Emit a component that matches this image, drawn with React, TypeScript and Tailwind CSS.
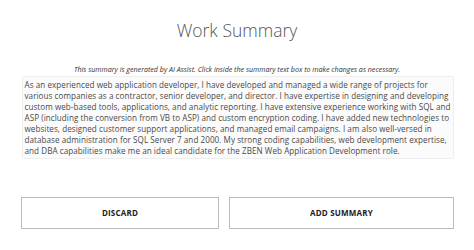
const summaryLines = [
  'As an experienced web application developer, I have developed and managed a wide range of projects for',
  'various companies as a contractor, senior developer, and director. I have expertise in designing and developing',
  'custom web-based tools, applications, and analytic reporting. I have extensive experience working with SQL and',
  'ASP (including the conversion from VB to ASP) and custom encryption coding. I have added new technologies to',
  'websites, designed customer support applications, and managed email campaigns. I am also well-versed in',
  'database administration for SQL Server 7 and 2000. My strong coding capabilities, web development expertise,',
  'and DBA capabilities make me an ideal candidate for the ZBEN Web Application Development role.',
];

export default function App() {
  return (
    <div className="w-[474px] h-[250px] bg-white flex flex-col items-center font-['Open_Sans',sans-serif] text-[#444]">
      <h1 className="mt-[17px] text-[17.5px] leading-[26px] font-light text-[#555]">Work Summary</h1>
      <p className="mt-[21px] text-[7.1px] leading-[10px] italic text-[#333]">
        This summary is generated by AI Assist. Click inside the summary text box to make changes as necessary.
      </p>
      <div className="mt-[2px] w-[432px] h-[83px] ml-[1px] bg-[#fbfbfb] border border-[#eeeeee] rounded-[2px] pl-[2px] pt-[2px] overflow-hidden">
        <p className="text-[8.1px] leading-[11px] text-[#4a4a4a] whitespace-nowrap tracking-[0.05px]">
          {summaryLines.map((line, i) => (
            <span key={i} className="block">{line}</span>
          ))}
        </p>
      </div>
      <div className="mt-[38px] w-[433px] ml-[1px] flex gap-[10px]">
        <button className="w-[198px] h-[32px] border border-[#bbbbbb] bg-white text-[8px] font-bold text-[#222] tracking-[0.2px]">
          DISCARD
        </button>
        <button className="flex-1 h-[32px] border border-[#bbbbbb] bg-white text-[8px] font-bold text-[#222] tracking-[0.2px]">
          ADD SUMMARY
        </button>
      </div>
    </div>
  );
}
